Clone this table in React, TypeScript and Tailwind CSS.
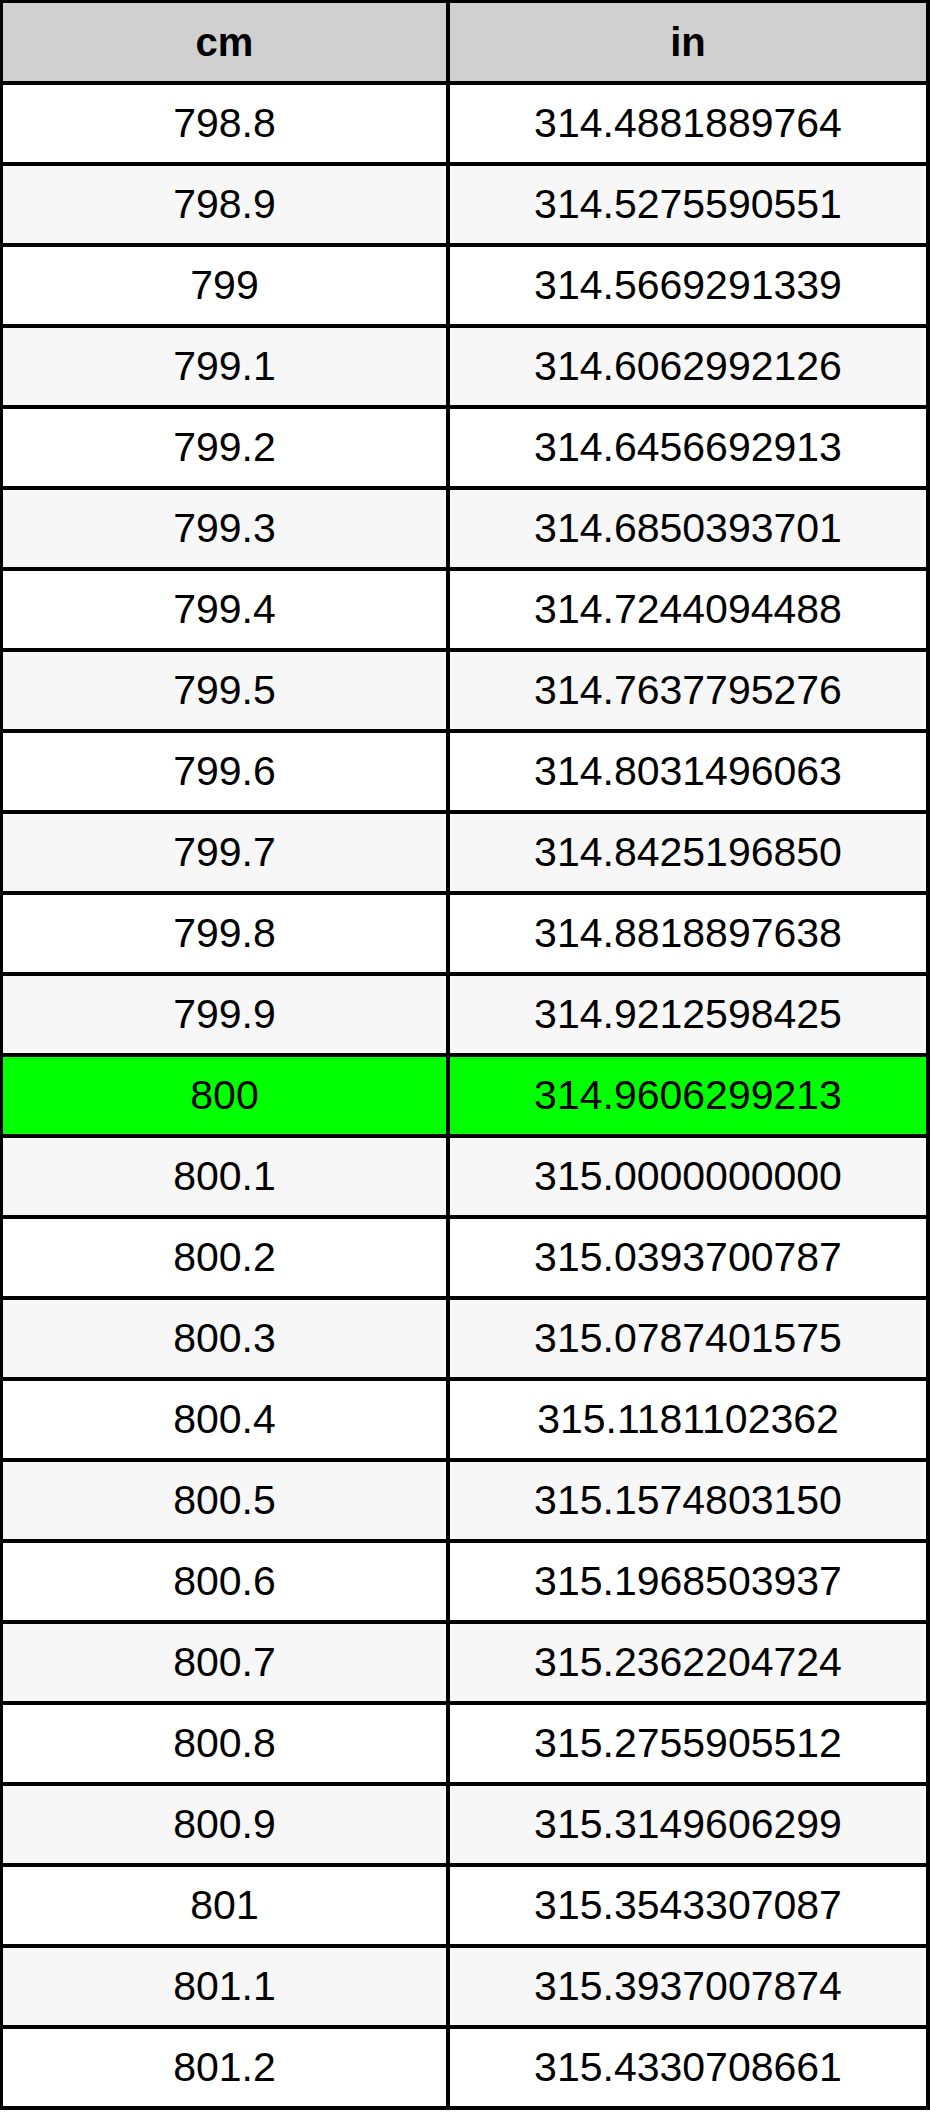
const rows: [string, string][] = [
  ["798.8", "314.4881889764"],
  ["798.9", "314.5275590551"],
  ["799", "314.5669291339"],
  ["799.1", "314.6062992126"],
  ["799.2", "314.6456692913"],
  ["799.3", "314.6850393701"],
  ["799.4", "314.7244094488"],
  ["799.5", "314.7637795276"],
  ["799.6", "314.8031496063"],
  ["799.7", "314.8425196850"],
  ["799.8", "314.8818897638"],
  ["799.9", "314.9212598425"],
  ["800", "314.9606299213"],
  ["800.1", "315.0000000000"],
  ["800.2", "315.0393700787"],
  ["800.3", "315.0787401575"],
  ["800.4", "315.1181102362"],
  ["800.5", "315.1574803150"],
  ["800.6", "315.1968503937"],
  ["800.7", "315.2362204724"],
  ["800.8", "315.2755905512"],
  ["800.9", "315.3149606299"],
  ["801", "315.3543307087"],
  ["801.1", "315.3937007874"],
  ["801.2", "315.4330708661"],
];

export default function App() {
  return (
    <div className="w-[930px] bg-white font-['Liberation_Sans',Arial,sans-serif] text-black">
      <div className="border-l-[3px] border-r-[4px] border-t-[3px] border-black">
        {/* Header */}
        <div className="flex h-[82px] border-b-[4px] border-black bg-[#d0d0d0] text-[40px] font-bold">
          <div className="flex w-[447px] shrink-0 items-center justify-center border-r-[4px] border-black">
            cm
          </div>
          <div className="flex flex-1 items-center justify-center">in</div>
        </div>

        {rows.map(([cm, inch], i) => {
          const bg =
            cm === "800" ? "bg-[#00ff00]" : i % 2 === 0 ? "bg-white" : "bg-[#f7f7f7]";
          return (
            <div
              key={cm}
              className={`flex h-[81px] border-b-[4px] border-black text-[41px] ${bg}`}
            >
              <div className="flex w-[447px] shrink-0 items-center justify-center border-r-[4px] border-black">
                {cm}
              </div>
              <div className="flex flex-1 items-center justify-center">{inch}</div>
            </div>
          );
        })}
      </div>
    </div>
  );
}
